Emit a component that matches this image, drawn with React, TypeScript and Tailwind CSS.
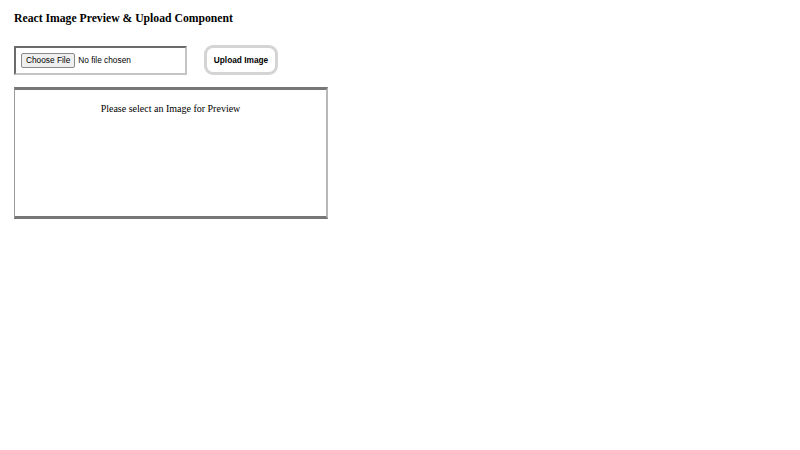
import React from 'react';

export default function App() {
  return (
    <div className="min-h-screen bg-white px-[14px] pt-[12px] text-black">
      {/* Title */}
      <h3 className="font-['Liberation_Serif',serif] text-[11.7px] font-bold leading-[14px]">
        React Image Preview &amp; Upload Component
      </h3>

      {/* Picker row */}
      <div className="mt-[19px] flex items-center gap-[17px]">
        <div className="flex h-[29px] w-[173px] items-center border-[2px] border-t-[#6b6b6b] border-l-[#6b6b6b] border-r-[#c4c4c4] border-b-[#c4c4c4] pl-[5px] font-['Liberation_Sans',sans-serif] text-[8.3px]">
          <span className="rounded-[2px] border border-[#8a8a8a] bg-[#efefef] px-[4px] py-[1.5px] leading-[10px]">
            Choose File
          </span>
          <span className="ml-[3px]">No file chosen</span>
        </div>
        <button className="h-[30px] w-[74px] rounded-[9px] border-[3px] border-[#d4d4d4] bg-white font-['Liberation_Sans',sans-serif] text-[8.3px] font-bold">
          Upload Image
        </button>
      </div>

      {/* Preview box */}
      <div className="mt-[12px] h-[132px] w-[314px] border-t-[3px] border-b-[3px] border-l border-r-[2px] border-t-[#777777] border-b-[#777777] border-l-[#9a9a9a] border-r-[#b8b8b8] pt-[11px] text-center font-['Liberation_Serif',serif] text-[10px]">
        Please select an Image for Preview
      </div>
    </div>
  );
}
